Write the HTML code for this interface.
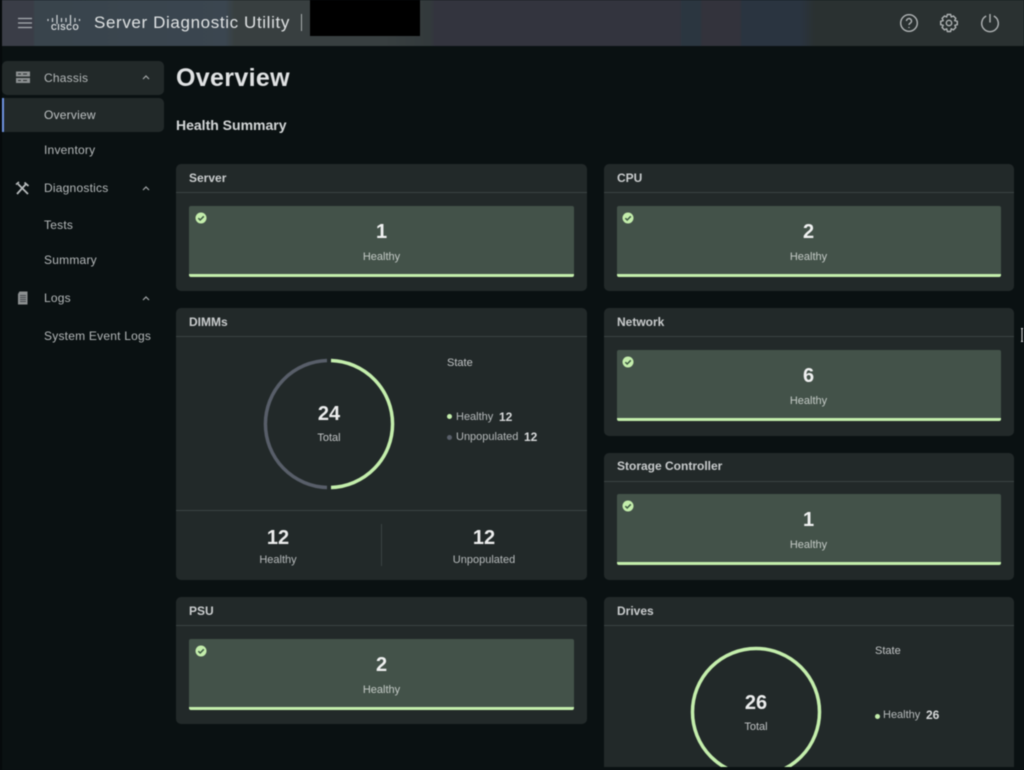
<!DOCTYPE html>
<html><head><meta charset="utf-8"><style>
*{box-sizing:border-box}
html,body{margin:0;padding:0;background:#0a1112}
body{width:1024px;height:770px;overflow:hidden;font-family:"Liberation Sans",sans-serif;position:relative;color:#d8dadb}
#w{position:absolute;left:0;top:0;width:1024px;height:770px;overflow:hidden;background:#0a1112;filter:blur(.4px)}
.a{position:absolute}
.t{position:absolute;white-space:nowrap;line-height:1}
.c{transform:translateX(-50%);text-align:center}
.card{position:absolute;background:#222929;border-radius:5px}
.card .h{position:absolute;left:0;right:0;top:0;height:29px;border-bottom:1px solid #3a4243}
.card .h span{position:absolute;left:13px;top:7px;font-size:12px;font-weight:bold;color:#c9cccd;line-height:14px}
.tile{position:absolute;left:13px;right:13px;top:42px;height:71px;background:#435249;border-radius:2px;border-bottom:3px solid #c4eeac}
.tile svg{position:absolute;left:6px;top:6px}
.r .tile svg{left:5px}
.tile b{position:absolute;left:0;right:0;text-align:center;top:16px;font-size:20px;line-height:20px;color:#f0f1f1}
.r .tile b,.r .tile i{left:-1px}
.tile i{position:absolute;left:0;right:0;text-align:center;top:45px;font-size:11px;line-height:13px;font-style:normal;color:#c4cac6}
.nav{font-size:12px;color:#b4b8b9;letter-spacing:.22px}
.chev{position:absolute;left:142px;width:8px;height:5px}
</style></head><body><div id="w">
<div class="a" style="left:0;top:0;width:1024px;height:46px;background:linear-gradient(90deg,#3a3d47 0,#3a3d47 33px,#39444c 35px,#3b4650 225px,#383f40 235px,#383f40 385px,#333a3c 430px,#33343e 435px,#33343e 680px,#2b3640 682px,#2b3640 700px,#33333c 702px,#33333c 740px,#2a3440 742px,#2a3440 800px,#2a3131 815px,#2a3131 100%)"></div>
<div class="a" style="left:0;top:0;width:2px;height:770px;background:#05090a"></div>

<svg class="a" style="left:18px;top:17px" width="14" height="12" viewBox="0 0 14 12"><path d="M0 1.500H14M0 6H14M0 10.500H14" stroke="#a9aeb2" stroke-width="1.300"/></svg>
<svg class="a" style="left:47px;top:14px" width="34" height="11" viewBox="0 0 34 11"><g stroke="#d0d4d7" stroke-width="1.200"><path d="M1 5V7M5.500 4V8M10 1V10M14.500 4V8M19 4V8M23.500 1V10M28 4V8M32.500 5V7"/></g></svg>
<div class="t" style="left:51px;top:24px;font-size:8px;font-weight:bold;color:#d8dbdd;letter-spacing:.6px">CISCO</div>
<div class="t" style="left:94px;top:14px;font-size:17px;color:#dfe2e3;letter-spacing:.62px">Server Diagnostic Utility</div>
<div class="a" style="left:301px;top:14px;width:1px;height:17px;background:#a8adad"></div>
<div class="a" style="left:310px;top:0;width:110px;height:36px;background:#000"></div>

<svg class="a" style="left:899px;top:13px" width="20" height="20" viewBox="0 0 20 20" fill="none" stroke="#b0b4b5" stroke-width="1.400"><circle cx="10" cy="10" r="8.300"/><path d="M7.500 8A2.500 2.500 0 1 1 11 10.300C10.200 10.800 10 11.200 10 12"/><path d="M10 14V15"/></svg>
<svg class="a" style="left:939px;top:13px" width="20" height="20" viewBox="0 0 20 20" fill="none" stroke="#b0b4b5" stroke-width="1.400"><path d="M8.300 1.500H11.700L12.200 4L14.400 3L16.800 5.400L15.600 7.600L18.300 8.300V11.700L15.800 12.300L16.800 14.500L14.400 16.900L12.200 15.800L11.700 18.500H8.300L7.700 15.800L5.500 16.900L3.100 14.500L4.200 12.300L1.700 11.700V8.300L4.300 7.600L3.100 5.400L5.500 3L7.700 4Z" stroke-linejoin="round"/><circle cx="10" cy="10" r="2.700"/></svg>
<svg class="a" style="left:980px;top:13px" width="20" height="20" viewBox="0 0 20 20" fill="none" stroke="#b0b4b5" stroke-width="1.400"><path d="M6.200 3A8.300 8.300 0 1 0 13.800 3"/><path d="M10 1V9.500"/></svg>

<div class="a" style="left:2px;top:61px;width:162px;height:34px;background:#222929;border-radius:5px"></div>
<div class="a" style="left:2px;top:98px;width:162px;height:34px;background:#222929;border-radius:0 5px 5px 0;border-left:2px solid #6f93e0"></div>
<svg class="a" style="left:16px;top:71px" width="14" height="13" viewBox="0 0 14 13"><rect x="0" y="0.500" width="14" height="5" fill="#8d9192"/><rect x="0" y="7" width="14" height="5" fill="#8d9192"/><path d="M2 3H5M7 3H11M2 9.500H5M7 9.500H11" stroke="#2b3031" stroke-width="1"/></svg>
<div class="t nav" style="left:44px;top:72px">Chassis</div>
<svg class="chev" style="top:75px" viewBox="0 0 8 5"><path d="M1 4L4 1L7 4" fill="none" stroke="#a5a9aa" stroke-width="1.200"/></svg>
<div class="t nav" style="left:44px;top:109px;color:#bfc3c4">Overview</div>
<div class="t nav" style="left:44px;top:144px">Inventory</div>
<svg class="a" style="left:15px;top:181px" width="15" height="15" viewBox="0 0 15 15" fill="none" stroke="#b8bcbd"><path d="M2 13L11 3" stroke-width="1.800"/><path d="M9.500 1.500L13.500 5" stroke-width="1.800"/><path d="M3 3L13 13" stroke-width="1.800"/><path d="M1 3.500L4 1" stroke-width="1.500"/></svg>
<div class="t nav" style="left:44px;top:182px">Diagnostics</div>
<svg class="chev" style="top:186px" viewBox="0 0 8 5"><path d="M1 4L4 1L7 4" fill="none" stroke="#a5a9aa" stroke-width="1.200"/></svg>
<div class="t nav" style="left:44px;top:219px">Tests</div>
<div class="t nav" style="left:44px;top:254px">Summary</div>
<svg class="a" style="left:17px;top:291px" width="12" height="14" viewBox="0 0 12 14"><path d="M2.500 .5H10.500V13.500H1V3Z" fill="#8d9192"/><path d="M3 4.500H9M3 6.500H9M3 8.500H9M3 10.500H9" stroke="#30353a" stroke-width=".8"/></svg>
<div class="t nav" style="left:44px;top:292px">Logs</div>
<svg class="chev" style="top:296px" viewBox="0 0 8 5"><path d="M1 4L4 1L7 4" fill="none" stroke="#a5a9aa" stroke-width="1.200"/></svg>
<div class="t nav" style="left:44px;top:330px">System Event Logs</div>

<div class="t" style="left:176px;top:66px;font-size:25px;font-weight:bold;color:#e0e2e3;letter-spacing:.35px">Overview</div>
<div class="t" style="left:176px;top:118px;font-size:14px;font-weight:bold;color:#d4d7d8">Health Summary</div>

<svg width="0" height="0" style="position:absolute"><defs><symbol id="ok" viewBox="0 0 12 12"><circle cx="6" cy="6" r="5.500" fill="#c4eeac"/><path d="M3.300 6.200L5.200 8L8.800 4.300" fill="none" stroke="#3d5a42" stroke-width="1.500"/></symbol></defs></svg>

<div class="card" style="left:176px;top:164px;width:411px;height:127px"><div class="h"><span>Server</span></div><div class="tile"><svg width="12" height="12"><use href="#ok"/></svg><b>1</b><i>Healthy</i></div></div>
<div class="card r" style="left:604px;top:164px;width:410px;height:127px"><div class="h"><span>CPU</span></div><div class="tile"><svg width="12" height="12"><use href="#ok"/></svg><b>2</b><i>Healthy</i></div></div>

<div class="card" style="left:176px;top:308px;width:411px;height:272px"><div class="h"><span>DIMMs</span></div>
<div class="a" style="left:0;right:0;top:202px;height:1px;background:#3a4243"></div>
<div class="a" style="left:205px;top:216px;width:1px;height:42px;background:#3a4243"></div></div>
<svg class="a" style="left:259px;top:354px" width="140" height="140" viewBox="0 0 140 140" fill="none" stroke-width="3.500"><path d="M68 6.530A63.500 63.500 0 0 0 68 133.470" stroke="#585e69"/><path d="M72 6.530A63.500 63.500 0 0 1 72 133.470" stroke="#c4eeac"/></svg>
<div class="t c" style="left:329px;top:404px;font-size:20px;font-weight:bold;color:#eceded">24</div>
<div class="t c" style="left:329px;top:433px;font-size:11px;color:#c0c3c4">Total</div>
<div class="t" style="left:447px;top:358px;font-size:11px;color:#c0c3c4">State</div>
<div class="a" style="left:447px;top:414px;width:5px;height:5px;border-radius:50%;background:#c4eeac"></div>
<div class="t" style="left:456px;top:412px;font-size:11px;color:#b6babb">Healthy</div>
<div class="t" style="left:499px;top:411px;font-size:12px;font-weight:bold;color:#d8dadb">12</div>
<div class="a" style="left:447px;top:435px;width:5px;height:5px;border-radius:50%;background:#585e69"></div>
<div class="t" style="left:456px;top:432px;font-size:11px;color:#b6babb">Unpopulated</div>
<div class="t" style="left:524px;top:431px;font-size:12px;font-weight:bold;color:#d8dadb">12</div>
<div class="t c" style="left:278px;top:528px;font-size:20px;font-weight:bold;color:#eceded">12</div>
<div class="t c" style="left:278px;top:555px;font-size:11px;color:#b6babb">Healthy</div>
<div class="t c" style="left:484px;top:528px;font-size:20px;font-weight:bold;color:#eceded">12</div>
<div class="t c" style="left:484px;top:555px;font-size:11px;color:#b6babb">Unpopulated</div>

<div class="card r" style="left:604px;top:308px;width:410px;height:128px"><div class="h"><span>Network</span></div><div class="tile"><svg width="12" height="12"><use href="#ok"/></svg><b>6</b><i>Healthy</i></div></div>
<div class="card r" style="left:604px;top:453px;width:410px;height:127px"><div class="h"><span style="top:6px">Storage Controller</span></div><div class="tile" style="top:41px"><svg width="12" height="12"><use href="#ok"/></svg><b>1</b><i>Healthy</i></div></div>
<div class="card" style="left:176px;top:597px;width:411px;height:127px"><div class="h"><span>PSU</span></div><div class="tile"><svg width="12" height="12"><use href="#ok"/></svg><b>2</b><i>Healthy</i></div></div>

<div class="card r" style="left:604px;top:597px;width:410px;height:170px;border-radius:5px 5px 0 0"><div class="h"><span>Drives</span></div></div>
<div class="a" style="left:680px;top:640px;width:160px;height:127px;overflow:hidden"><svg class="a" style="left:0;top:0" width="160" height="150" viewBox="0 0 160 150" fill="none"><circle cx="76" cy="72" r="63.500" stroke="#c4eeac" stroke-width="3.500"/></svg></div>
<div class="t c" style="left:756px;top:693px;font-size:20px;font-weight:bold;color:#eceded">26</div>
<div class="t c" style="left:756px;top:722px;font-size:11px;color:#c0c3c4">Total</div>
<div class="t" style="left:875px;top:646px;font-size:11px;color:#c0c3c4">State</div>
<div class="a" style="left:875px;top:714px;width:5px;height:5px;border-radius:50%;background:#c4eeac"></div>
<div class="t" style="left:883px;top:710px;font-size:11px;color:#b6babb">Healthy</div>
<div class="t" style="left:926px;top:709px;font-size:12px;font-weight:bold;color:#d8dadb">26</div>

<svg class="a" style="left:1021px;top:328px" width="3" height="14" viewBox="0 0 3 14"><path d="M0 .5H2M1 .5V13.500M0 13.500H2" stroke="#d0d0d0" fill="none"/></svg>
</div></body></html>
